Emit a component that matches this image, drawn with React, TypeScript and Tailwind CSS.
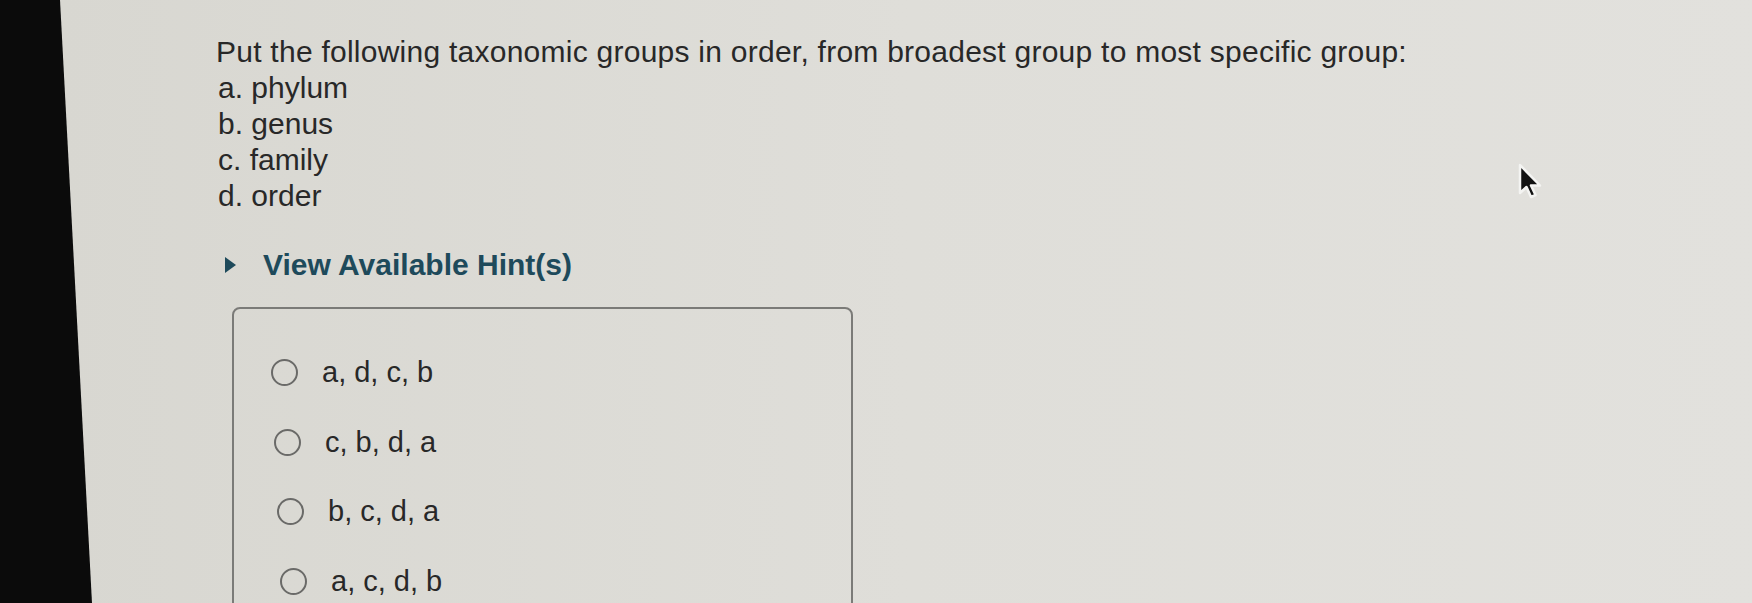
import React from 'react';

const options = [
  { text: 'a, d, c, b', shift: 'ml-0' },
  { text: 'c, b, d, a', shift: 'ml-[3px]' },
  { text: 'b, c, d, a', shift: 'ml-[6px]' },
  { text: 'a, c, d, b', shift: 'ml-[9px]' },
];
const groups = ['a. phylum', 'b. genus', 'c. family', 'd. order'];

const Cursor = () => (
  <svg className="absolute left-[1514px] top-[160px]" width="32" height="42" viewBox="0 0 32 42">
    <path d="M6 5 L6 33 L12.5 27 L17 37 L21.5 35 L17 25.5 L26 25.5 Z" fill="#111" stroke="#f4f4f2" strokeWidth="2.5" strokeLinejoin="round" />
  </svg>
);

const App: React.FC = () => {
  return (
    <div className="relative flex h-[603px] w-[1752px] overflow-hidden bg-[#0c0c0c] font-['Liberation_Sans',Arial,sans-serif]">
      <div className="w-[58px] shrink-0 bg-[#0b0b0b]" />
      <div className="flex-1 bg-gradient-to-r from-[#d8d7d1] via-[#dfded9] to-[#e2e1dd] pl-[158px] pt-[34px]">
        <p className="text-[30px] leading-[36px] tracking-[0.25px] text-[#282828]">
          Put the following taxonomic groups in order, from broadest group to most specific group:
        </p>
        <ul className="pl-[2px] text-[30px] leading-[36px] text-[#282828]">
          {groups.map((g) => (
            <li key={g}>{g}</li>
          ))}
        </ul>

        <button className="mt-[33px] flex items-center gap-[27px] pl-[9px] text-[30px] font-bold leading-[36px] text-[#1e4a5b]">
          <svg width="11" height="16" viewBox="0 0 11 16">
            <path d="M0 0 L11 8 L0 16 Z" fill="#1e4a5b" />
          </svg>
          View Available Hint(s)
        </button>

        <div className="ml-[16px] mt-[24px] h-[340px] w-[621px] rounded-[8px] border-2 border-[#7b7b78] pl-[37px] pt-[29px]">
          {options.map((o) => (
            <label key={o.text} className={`flex h-[69.5px] items-center gap-[24px] text-[29px] text-[#282828] ${o.shift}`}>
              <span className="h-[27px] w-[27px] rounded-full border-2 border-[#6a6a68]" />
              {o.text}
            </label>
          ))}
        </div>
      </div>
      <svg className="absolute left-0 top-0" width="100" height="603" viewBox="0 0 100 603">
        <polygon points="57,0 60,0 92,603 57,603" fill="#0b0b0b" />
      </svg>
      <Cursor />
    </div>
  );
};

export default App;
